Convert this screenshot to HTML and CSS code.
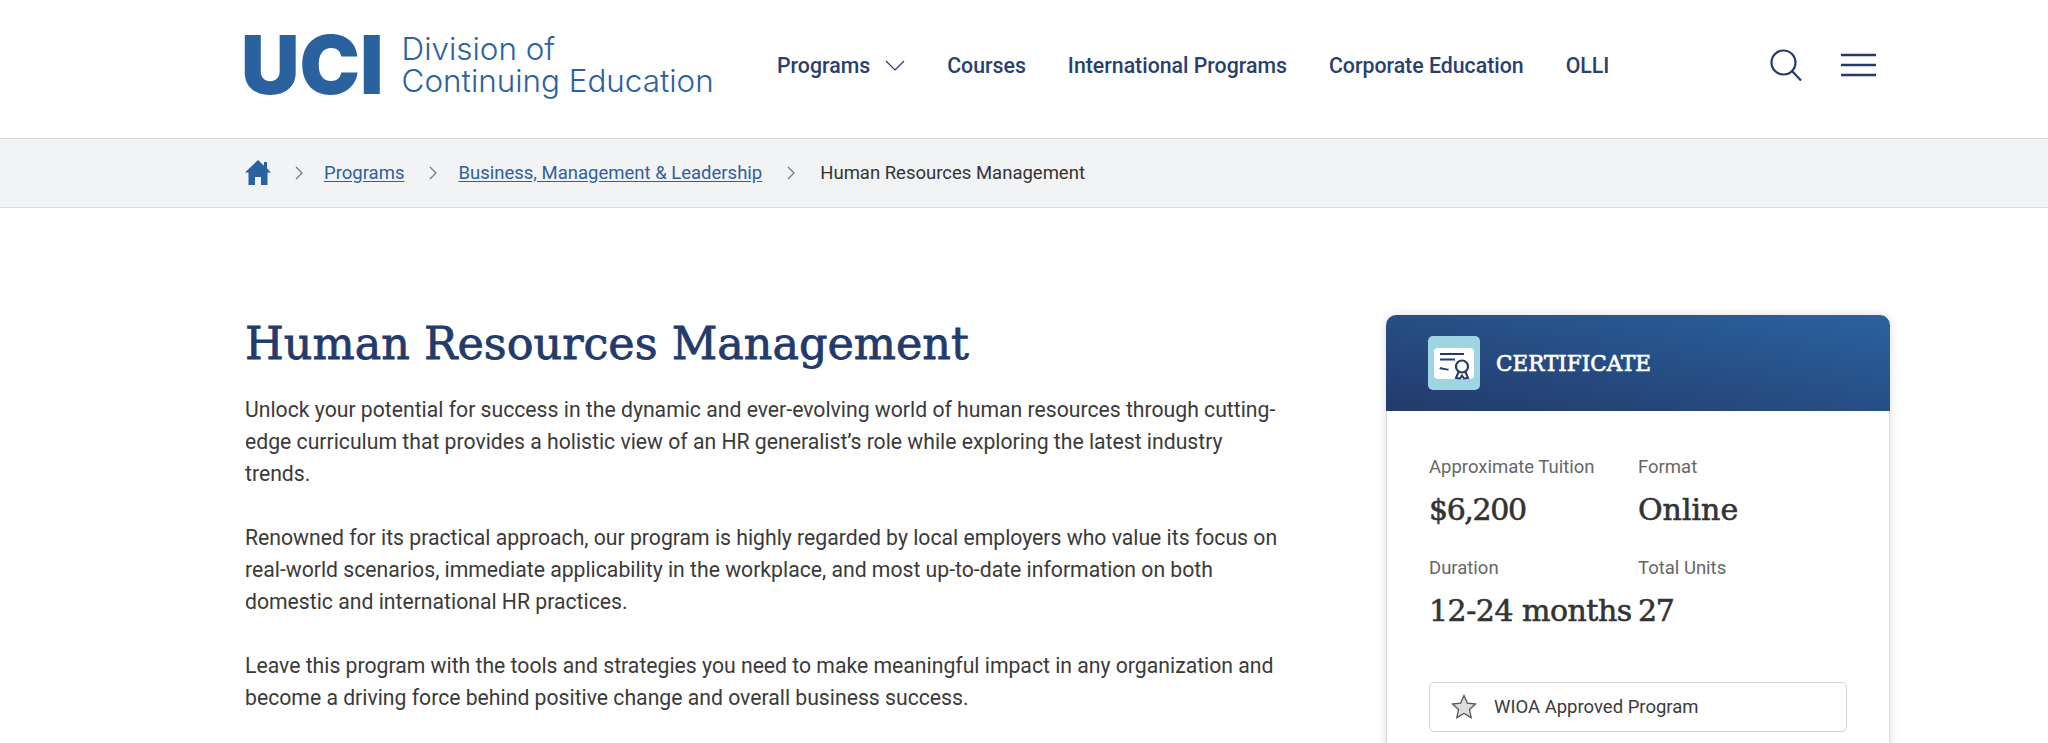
FILE: index.html
```html
<!DOCTYPE html>
<html lang="en">
<head>
<meta charset="utf-8">
<title>Human Resources Management</title>
<link rel="stylesheet" href="styles.css">
</head>
<body>
<header class="site-header">
  <a class="logo" href="#">
    <span class="logo-mark">UCI</span>
    <span class="logo-text">Division of<br>Continuing Education</span>
  </a>
  <nav class="main-nav">
    <a class="nav-link nav-programs" href="#">Programs
      <svg class="chevron" width="20" height="11" viewBox="0 0 20 11"><path d="M1 1l9 9 9-9" fill="none" stroke="#233a6b" stroke-width="1.2"/></svg>
    </a>
    <a class="nav-link" href="#">Courses</a>
    <a class="nav-link" href="#">International Programs</a>
    <a class="nav-link" href="#">Corporate Education</a>
    <a class="nav-link" href="#">OLLI</a>
  </nav>
  <div class="header-tools">
    <svg width="32" height="32" viewBox="0 0 32 32"><circle cx="13.5" cy="13.5" r="12" fill="none" stroke="#233a6b" stroke-width="2.200"/><path d="M22 22l9 9.500" fill="none" stroke="#233a6b" stroke-width="2.200"/></svg>
    <svg width="35" height="24" viewBox="0 0 35 24"><path d="M0 2h35M0 12h35M0 22h35" stroke="#233a6b" stroke-width="2.600"/></svg>
  </div>
</header>
<div class="crumbs">
  <svg class="home" width="26" height="25" viewBox="0 0 26 25"><path d="M13 0L0 12.500h3.500V25h6.500v-8h6v8h6.500V12.500H26l-4-3.900V2h-3v3.700z" fill="#2a629f"/></svg>
  <svg class="sep" width="9" height="14" viewBox="0 0 9 14"><path d="M1 1l6 6-6 6" fill="none" stroke="#77797c" stroke-width="1.300"/></svg>
  <a href="#">Programs</a>
  <svg class="sep" width="9" height="14" viewBox="0 0 9 14"><path d="M1 1l6 6-6 6" fill="none" stroke="#77797c" stroke-width="1.300"/></svg>
  <a href="#">Business, Management &amp; Leadership</a>
  <svg class="sep" width="9" height="14" viewBox="0 0 9 14"><path d="M1 1l6 6-6 6" fill="none" stroke="#77797c" stroke-width="1.300"/></svg>
  <span class="current">Human Resources Management</span>
</div>
<main class="content">
  <article class="intro">
    <h1>Human Resources Management</h1>
    <p>Unlock your potential for success in the dynamic and ever-evolving world of human resources through cutting-edge curriculum that provides a holistic view of an HR generalist’s role while exploring the latest industry trends.</p>
    <p>Renowned for its practical approach, our program is highly regarded by local employers who value its focus on real-world scenarios, immediate applicability in the workplace, and most up-to-date information on both domestic and international HR practices.</p>
    <p>Leave this program with the tools and strategies you need to make meaningful impact in any organization and become a driving force behind positive change and overall business success.</p>
  </article>
  <aside class="card">
    <div class="card-head">
      <span class="badge">
        <svg width="40" height="33" viewBox="0 0 40 33">
          <rect width="40" height="31" y="1" rx="4" fill="#fff"/>
          <path d="M6 7h24M6 12.500h15" fill="none" stroke="#233a6b" stroke-width="2"/>
          <path d="M6 22c1.500-2.500 2 .5 3.500 0s2 1 5 .5" fill="none" stroke="#233a6b" stroke-width="1.800"/>
          <path d="M24.500 25l-2.500 6 4 .5 2-3 2 3 4-.5-2.500-6" fill="#fff" stroke="#233a6b" stroke-width="2"/>
          <circle cx="28" cy="19.500" r="6" fill="#fff" stroke="#233a6b" stroke-width="2.200"/>
        </svg>
      </span>
      <span class="card-title">CERTIFICATE</span>
    </div>
    <div class="card-body">
      <dl class="facts">
        <div class="fact"><dt>Approximate Tuition</dt><dd class="tight">$6,200</dd></div>
        <div class="fact"><dt>Format</dt><dd>Online</dd></div>
        <div class="fact"><dt>Duration</dt><dd class="snug">12-24 months</dd></div>
        <div class="fact"><dt>Total Units</dt><dd class="tight">27</dd></div>
      </dl>
      <div class="wioa">
        <svg width="26" height="26" viewBox="0 0 26 26"><path d="M13 1.500l3.400 7.600 8.100.9-6.100 5.500 1.800 8.100L13 19.500l-7.200 4.100 1.800-8.100L1.500 10l8.100-.9z" fill="#dcdcdc" stroke="#55575a" stroke-width="1.300"/></svg>
        <span>WIOA Approved Program</span>
      </div>
    </div>
  </aside>
</main>
</body>
</html>
```
FILE: styles.css
```css
* { box-sizing: border-box; }
html, body { margin: 0; height: 743px; overflow: hidden; background: #fff; }
body { font-family: Roboto, "Liberation Sans", sans-serif; color: #333; }
a { text-decoration: none; color: inherit; }

.site-header { height: 139px; display: flex; align-items: center; padding: 0 172px 8px 245px; border-bottom: 1px solid #d2d4d7; }
.logo { display: flex; align-items: center; gap: 18px; width: 532px; color: #2a629f; }
.logo-mark { margin-left: -4px; font-family: Inter, sans-serif; font-weight: 900; font-size: 81px; line-height: 60px; }
.logo-text { font-family: Inter, sans-serif; font-weight: 300; font-size: 31.400px; line-height: 32px; white-space: nowrap; }
.main-nav { display: flex; align-items: center; gap: 42px; flex: 1; }
.nav-link { font-size: 21.3px; font-weight: 500; color: #2a3f6e; white-space: nowrap; }
.nav-programs { display: flex; align-items: center; gap: 15px; }
.header-tools { display: flex; align-items: center; gap: 39px; }

.crumbs { height: 69px; display: flex; align-items: center; padding: 0 0 1px 245px; background: #f2f3f5; border-bottom: 1px solid #d9dbde; font-size: 18.500px; }
.crumbs a { color: #2f5f9e; text-decoration: underline; text-underline-offset: 2px; }
.crumbs .sep { margin: 0 20px 0 24px; }
.crumbs a + .sep { margin: 0 20px 0 25px; }
.current { margin-left: 4px; color: #333; }

.content { display: flex; justify-content: space-between; align-items: flex-start; padding: 107px 158px 0 245px; }
.intro { width: 1040px; }
h1 { margin: 0 0 21px; font-family: "Roboto Slab", "DejaVu Serif", serif; font-weight: 400; font-size: 44.500px; line-height: 58px; color: #233a6b; -webkit-text-stroke: .8px #233a6b; }
.intro p { margin: 0 0 32px; font-size: 21.200px; line-height: 32px; color: #3a3a3a; }

.card { width: 504px; border-radius: 10px 10px 0 0; box-shadow: 0 0 10px rgba(0,0,0,.14); overflow: hidden; flex: none; }
.card-head { height: 96px; display: flex; align-items: center; gap: 16px; padding: 0 0 0 42px; background: linear-gradient(to top right, #233a6b, #2a629f); }
.badge { width: 52px; height: 54px; display: flex; align-items: center; justify-content: center; background: #9fd5e3; border-radius: 5px; }
.card-title { font-family: "Roboto Slab", "DejaVu Serif", serif; font-size: 21.500px; color: #fff; -webkit-text-stroke: .7px #fff; }
.card-body { padding: 44px 42px 0; background: #fff; border-left: 1px solid #d9dbde; border-right: 1px solid #d9dbde; height: 500px; }
.facts { display: grid; grid-template-columns: 209px 1fr; row-gap: 24px; margin: 0 0 49px; }
.fact dt { font-size: 18.500px; line-height: 24px; color: #666; }
.fact dd { margin: 9px 0 0; font-family: "Roboto Slab", "DejaVu Serif", serif; font-size: 30px; line-height: 44px; color: #333; -webkit-text-stroke: .6px #333; }
.fact .tight { letter-spacing: -1.400px; }
.fact .snug { letter-spacing: -.5px; }
.wioa { width: 418px; height: 50px; display: flex; align-items: center; gap: 17px; padding-left: 21px; border: 1px solid #d2d4d7; border-radius: 5px; font-size: 18.500px; color: #3a3a3a; }
```
